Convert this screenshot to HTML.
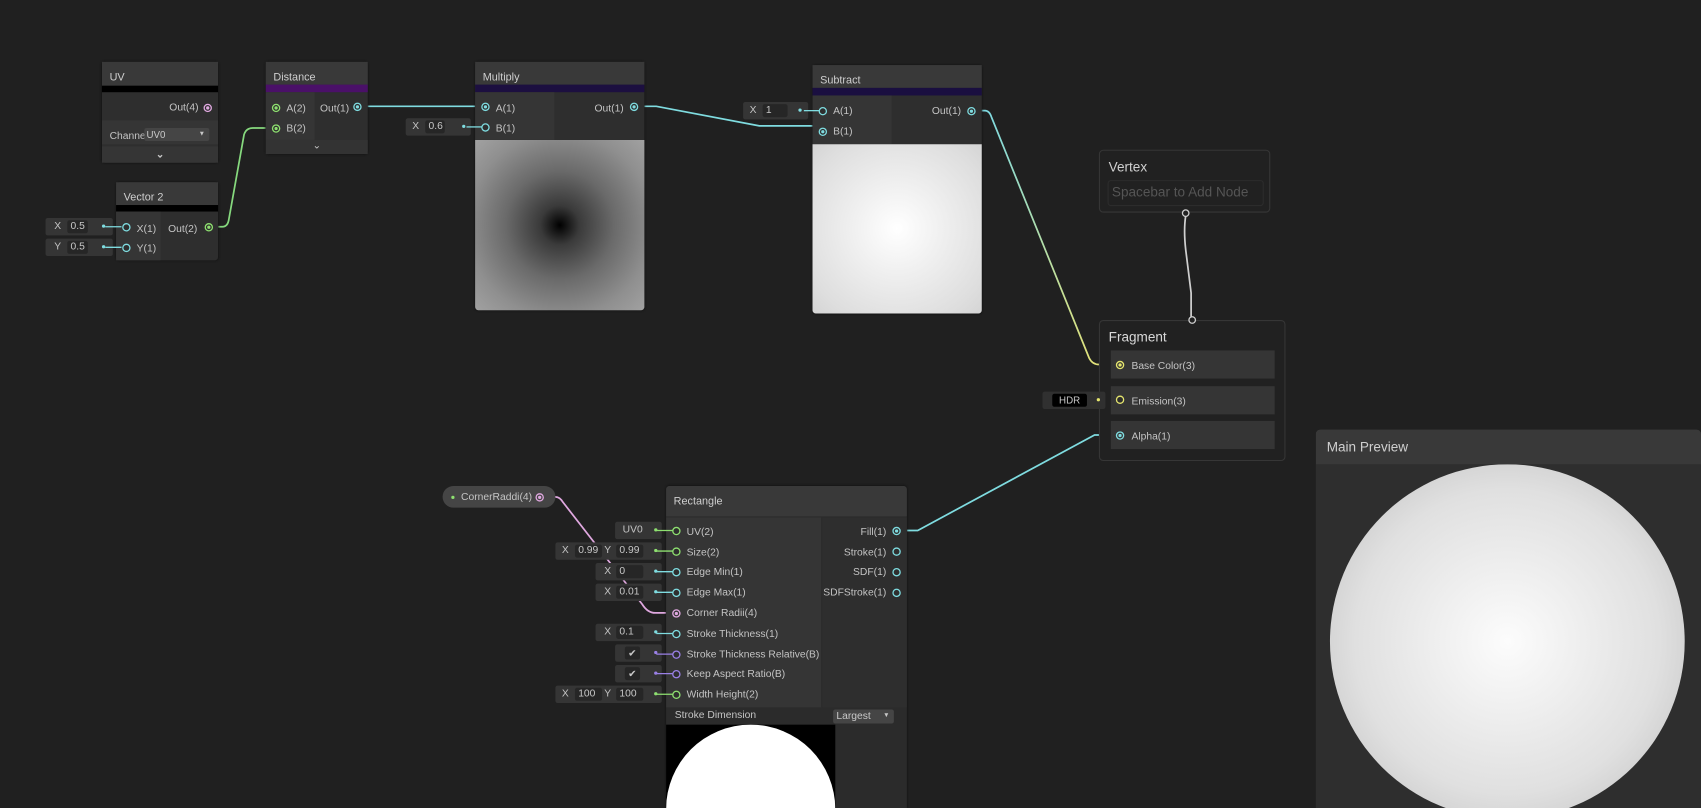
<!DOCTYPE html>
<html><head><meta charset="utf-8">
<style>
*{box-sizing:border-box;margin:0;padding:0}
html,body{width:1701px;height:808px;overflow:hidden;background:#202020}
#s{position:absolute;left:0;top:0;width:1568px;height:745px;overflow:hidden;transform:scale(1.0848);transform-origin:0 0;font-family:"Liberation Sans",sans-serif;color:#c8c8c8;font-size:9.5px}
.a{position:absolute}
.node{position:absolute;background:#2e2e2e;border-radius:3px;box-shadow:0 0 2px #111}
.hd{position:absolute;left:0;right:0;top:0;background:#393939;padding:9px 0 0 7px;font-size:10px;color:#cfcfcf}
.fld{position:absolute;background:#353535;height:16px;border-radius:2px;font-size:9.5px;color:#c8c8c8}
.box{position:absolute;background:#262626;border-radius:2px;top:2px;height:12px;padding-left:3px;line-height:12px}
.lbl{position:absolute;font-size:9.5px;color:#c4c4c4;white-space:nowrap}
.dot{position:absolute;width:3px;height:3px;border-radius:50%}
</style></head><body><div id="s">

<svg class="a" style="left:0;top:0" width="1568" height="745">
<defs>
<linearGradient id="g1" x1="0" x2="1"><stop offset="0" stop-color="#e0b0e0"/><stop offset="1" stop-color="#9be28e"/></linearGradient>
<linearGradient id="g2" x1="0" y1="0" x2="0" y2="1"><stop offset="0" stop-color="#7fd9e0"/><stop offset="1" stop-color="#e2e27a"/></linearGradient>
</defs>
<g fill="none" stroke-width="1.6">
<path d="M196 99 H250" stroke="url(#g1)"/>
<path d="M196 209 H205 Q210 209 211 202 L225 124 Q227 118 233 118 H250" stroke="#86d97e"/>
<path d="M333 98 H443" stroke="#7fdce0"/>
<path d="M588 98 H605 L700 116 H754" stroke="#7fdce0"/>
<path d="M899 102 H908 Q912 102 914 108 L1004 330 Q1007 336 1013 336 H1029" stroke="url(#g2)"/>
<path d="M1093 199 Q1091 212 1093 230 L1098 270 V292" stroke="#cfcfcf"/>
<path d="M831 489 H846 L1009 401 H1029" stroke="#7fdce0"/>
<path d="M501 458 H512 Q516 458 519 463 L592 557 Q597 565 604 565 H619" stroke="#e0a8e0"/>
<path d="M1019 368 H1029" stroke="#e6e66e"/>
</g>
</svg>

<div class="node" style="left:94px;top:57px;width:107px;height:93px">
 <div class="hd" style="height:22px">UV</div>
 <div class="a" style="left:0;right:0;top:22px;height:6px;background:#000"></div>
 <div class="lbl" style="right:18px;top:37px">Out(4)</div>
 <div class="a" style="left:0;right:0;top:54px;height:22px;background:#353535"></div>
 <div class="lbl" style="left:7px;top:63px">Channe</div>
 <div class="a" style="left:39px;top:61px;width:60px;height:12px;background:#454545;border-radius:2px;font-size:9px;padding-left:2px;line-height:12px">UV0<span style="position:absolute;right:4px;font-size:6px">▼</span></div>
 <div class="a" style="left:0;right:0;top:78px;height:15px;background:#353535;text-align:center;font-size:9px;line-height:14px;font-weight:bold">⌄</div>
</div>
<svg class="a" style="left:186px;top:94px" width="11" height="11"><circle cx="5.5" cy="5.5" r="3.3" fill="none" stroke="#e0a8e0" stroke-width="1.2"/><circle cx="5.5" cy="5.5" r="1.5" fill="#e0a8e0"/></svg>

<div class="node" style="left:245px;top:57px;width:94px;height:85px">
 <div class="hd" style="height:21px">Distance</div>
 <div class="a" style="left:0;right:0;top:21px;height:7px;background:#4a1068"></div>
 <div class="a" style="left:0;width:45px;top:28px;height:44px;background:#353535"></div>
 <div class="lbl" style="left:19px;top:38px">A(2)</div>
 <div class="lbl" style="left:19px;top:56px">B(2)</div>
 <div class="lbl" style="left:50px;top:38px">Out(1)</div>
 <div class="a" style="left:0;right:0;top:72px;height:13px;background:#333;text-align:center;font-size:9px;line-height:11px">⌄</div>
</div>

<div class="node" style="left:438px;top:57px;width:156px;height:229px">
 <div class="hd" style="height:21px">Multiply</div>
 <div class="a" style="left:0;right:0;top:21px;height:7px;background:#1c0f40"></div>
 <div class="a" style="left:0;width:73px;top:28px;height:44px;background:#353535"></div>
 <div class="lbl" style="left:19px;top:38px">A(1)</div>
 <div class="lbl" style="left:19px;top:56px">B(1)</div>
 <div class="lbl" style="right:19px;top:38px">Out(1)</div>
 <div class="a" style="left:0;right:0;top:72px;bottom:0;border-radius:0 0 3px 3px;background:radial-gradient(circle at 50% 50%,#000 0,#3a3a3a 18px,#6a6a6a 50px,#8f8f8f 85px,#a8a8a8 120px)"></div>
</div>
<div class="fld" style="left:374px;top:109px;width:60px"><span class="lbl" style="left:6px;top:2px">X</span><div class="box" style="left:18px;width:18px">0.6</div><div class="dot" style="left:52px;top:6px;background:#7fdce0"></div></div>

<div class="node" style="left:107px;top:168px;width:94px;height:72px">
 <div class="hd" style="height:21px">Vector 2</div>
 <div class="a" style="left:0;right:0;top:21px;height:6px;background:#000"></div>
 <div class="a" style="left:0;width:41px;top:27px;height:45px;background:#353535"></div>
 <div class="lbl" style="left:19px;top:38px">X(1)</div>
 <div class="lbl" style="left:19px;top:56px">Y(1)</div>
 <div class="lbl" style="left:48px;top:38px">Out(2)</div>
</div>
<div class="fld" style="left:42px;top:201px;width:62px"><span class="lbl" style="left:8px;top:2px">X</span><div class="box" style="left:20px;width:19px">0.5</div><div class="dot" style="left:52px;top:6px;background:#7fdce0"></div></div>
<div class="fld" style="left:42px;top:220px;width:62px"><span class="lbl" style="left:8px;top:2px">Y</span><div class="box" style="left:20px;width:19px">0.5</div><div class="dot" style="left:52px;top:6px;background:#7fdce0"></div></div>

<div class="node" style="left:749px;top:60px;width:156px;height:229px">
 <div class="hd" style="height:21px">Subtract</div>
 <div class="a" style="left:0;right:0;top:21px;height:7px;background:#1a0f40"></div>
 <div class="a" style="left:0;width:73px;top:28px;height:45px;background:#353535"></div>
 <div class="lbl" style="left:19px;top:37px">A(1)</div>
 <div class="lbl" style="left:19px;top:56px">B(1)</div>
 <div class="lbl" style="right:19px;top:37px">Out(1)</div>
 <div class="a" style="left:0;right:0;top:73px;bottom:0;border-radius:0 0 3px 3px;background:radial-gradient(circle at 50% 50%,#fff 0,#f0f0f0 40px,#dedede 90px,#d0d0d0 120px)"></div>
</div>
<div class="fld" style="left:685px;top:94px;width:60px"><span class="lbl" style="left:6px;top:2px">X</span><div class="box" style="left:18px;width:23px">1</div><div class="dot" style="left:51px;top:6px;background:#7fdce0"></div></div>

<div class="a" style="left:1013px;top:138px;width:158px;height:58px;border:1px solid #363636;border-radius:4px;background:#212121">
 <div class="lbl" style="left:8px;top:8px;font-size:12.5px;color:#d0d0d0">Vertex</div>
 <div class="a" style="left:7px;top:27px;width:144px;height:24px;border:1px solid #2c2c2c;border-radius:3px;font-size:12.5px;color:#555;padding:3px 0 0 3px">Spacebar to Add Node</div>
</div>

<div class="a" style="left:1013px;top:295px;width:172px;height:130px;border:1px solid #363636;border-radius:4px;background:#212121">
 <div class="lbl" style="left:8px;top:8px;font-size:12.5px;color:#d8d8d8">Fragment</div>
 <div class="a" style="left:10px;top:27px;width:151px;height:26px;background:#353535"><span class="lbl" style="left:19px;top:9px">Base Color(3)</span></div>
 <div class="a" style="left:10px;top:60px;width:151px;height:26px;background:#353535"><span class="lbl" style="left:19px;top:9px">Emission(3)</span></div>
 <div class="a" style="left:10px;top:92px;width:151px;height:26px;background:#353535"><span class="lbl" style="left:19px;top:9px">Alpha(1)</span></div>
</div>
<div class="fld" style="left:961px;top:361px;width:58px;background:#303030"><div class="box" style="left:9px;width:32px;background:#000;text-align:center;padding:0;font-size:9px">HDR</div><div class="dot" style="left:50px;top:6px;background:#e6e66e"></div></div>

<div class="a" style="left:1213px;top:396px;width:355px;height:349px;background:#2e2e2e;border-radius:4px 4px 0 0;overflow:hidden">
 <div class="a" style="left:13px;top:32px;width:327px;height:327px;border-radius:50%;background:radial-gradient(circle at 50% 50%,#fcfcfc 0,#eeeeee 70px,#e0e0e0 140px,#d6d6d6 163px)"></div>
 <div class="a" style="left:0;right:0;top:0;height:32px;background:#393939;padding:9px 0 0 10px;font-size:12.5px;color:#cfcfcf">Main Preview</div>
</div>

<div class="a" style="left:408px;top:448px;width:104px;height:20px;border-radius:10px;background:#454545">
 <div class="dot" style="left:8px;top:9px;background:#8ee070"></div>
 <span class="lbl" style="left:17px;top:5px">CornerRaddi(4)</span>
</div>
<svg class="a" style="left:492px;top:453px" width="11" height="11"><circle cx="5.5" cy="5.5" r="3.3" fill="none" stroke="#e0a8e0" stroke-width="1.2"/><circle cx="5.5" cy="5.5" r="1.5" fill="#e0a8e0"/></svg>

<div class="node" style="left:614px;top:448px;width:222px;height:297px;background:#2b2b2b;border-radius:3px 3px 0 0;overflow:hidden">
 <div class="hd" style="height:28px;padding-top:9px">Rectangle</div>
 <div class="a" style="left:0;width:143px;top:29px;height:175px;background:#353535"></div>
 <div class="a" style="left:144px;right:0;top:29px;height:175px;background:#2e2e2e"></div>
 <div class="lbl" style="left:19px;top:37px">UV(2)</div>
 <div class="lbl" style="left:19px;top:56px">Size(2)</div>
 <div class="lbl" style="left:19px;top:74px">Edge Min(1)</div>
 <div class="lbl" style="left:19px;top:93px">Edge Max(1)</div>
 <div class="lbl" style="left:19px;top:112px">Corner Radii(4)</div>
 <div class="lbl" style="left:19px;top:131px">Stroke Thickness(1)</div>
 <div class="lbl" style="left:19px;top:150px">Stroke Thickness Relative(B)</div>
 <div class="lbl" style="left:19px;top:168px">Keep Aspect Ratio(B)</div>
 <div class="lbl" style="left:19px;top:187px">Width Height(2)</div>
 <div class="lbl" style="right:19px;top:37px">Fill(1)</div>
 <div class="lbl" style="right:19px;top:56px">Stroke(1)</div>
 <div class="lbl" style="right:19px;top:74px">SDF(1)</div>
 <div class="lbl" style="right:19px;top:93px">SDFStroke(1)</div>
 <div class="lbl" style="left:8px;top:206px">Stroke Dimension</div>
 <div class="a" style="left:154px;top:206px;width:56px;height:13px;background:#454545;border-radius:2px;font-size:9.5px;padding-left:3px;line-height:13px">Largest<span style="position:absolute;right:4px;font-size:6px">▼</span></div>
 <div class="a" style="left:0;top:220px;width:156px;height:80px;background:#000;overflow:hidden"><div class="a" style="left:0;top:0;width:156px;height:156px;border-radius:50%;background:#fff"></div></div>
</div>
<div class="fld" style="left:567px;top:481px;width:43px"><span class="lbl" style="left:7px;top:2px">UV0</span><div class="dot" style="left:36px;top:6px;background:#8ee070"></div></div>
<div class="fld" style="left:512px;top:500px;width:98px"><span class="lbl" style="left:6px;top:2px">X</span><div class="box" style="left:18px;width:25px">0.99</div><span class="lbl" style="left:45px;top:2px">Y</span><div class="box" style="left:56px;width:25px;overflow:hidden">0.99</div><div class="dot" style="left:91px;top:6px;background:#8ee070"></div></div>
<div class="fld" style="left:549px;top:519px;width:61px"><span class="lbl" style="left:8px;top:2px">X</span><div class="box" style="left:19px;width:25px">0</div><div class="dot" style="left:54px;top:6px;background:#7fdce0"></div></div>
<div class="fld" style="left:549px;top:538px;width:61px"><span class="lbl" style="left:8px;top:2px">X</span><div class="box" style="left:19px;width:25px">0.01</div><div class="dot" style="left:54px;top:6px;background:#7fdce0"></div></div>
<div class="fld" style="left:549px;top:575px;width:61px"><span class="lbl" style="left:8px;top:2px">X</span><div class="box" style="left:19px;width:25px">0.1</div><div class="dot" style="left:54px;top:6px;background:#7fdce0"></div></div>
<div class="fld" style="left:567px;top:594px;width:43px"><div class="box" style="left:9px;width:14px;font-size:9px;padding-left:3px">✔</div><div class="dot" style="left:36px;top:6px;background:#9a80e6"></div></div>
<div class="fld" style="left:567px;top:613px;width:43px"><div class="box" style="left:9px;width:14px;font-size:9px;padding-left:3px">✔</div><div class="dot" style="left:36px;top:6px;background:#9a80e6"></div></div>
<div class="fld" style="left:512px;top:632px;width:98px"><span class="lbl" style="left:6px;top:2px">X</span><div class="box" style="left:18px;width:25px">100</div><span class="lbl" style="left:45px;top:2px">Y</span><div class="box" style="left:56px;width:25px">100</div><div class="dot" style="left:91px;top:6px;background:#8ee070"></div></div>

<svg class="a" style="left:0;top:0" width="1568" height="745">
<g stroke-width="1.2">
<g fill="none">
<path d="M97 209 H112 M97 228 H112" stroke="#7fdce0"/>
<path d="M430 117 H444" stroke="#7fdce0"/>
<path d="M741 102 H755" stroke="#7fdce0"/>
<path d="M605 489 H620 M605 508 H620 M605 640 H620" stroke="#8ee070"/>
<path d="M605 527 H620 M605 546 H620 M605 584 H620" stroke="#7fdce0"/>
<path d="M605 603 H620 M605 621 H620" stroke="#9a80e6"/>
</g>
<g fill="#2e2e2e">
<circle cx="116.5" cy="209.5" r="3.3" stroke="#7fdce0"/>
<circle cx="116.5" cy="228.5" r="3.3" stroke="#7fdce0"/>
<circle cx="447.5" cy="117.5" r="3.3" stroke="#7fdce0"/>
<circle cx="758.5" cy="102.5" r="3.3" stroke="#7fdce0"/>
<circle cx="623.5" cy="489.5" r="3.3" stroke="#8ee070"/>
<circle cx="623.5" cy="508.5" r="3.3" stroke="#8ee070"/>
<circle cx="623.5" cy="527.5" r="3.3" stroke="#7fdce0"/>
<circle cx="623.5" cy="546.5" r="3.3" stroke="#7fdce0"/>
<circle cx="623.5" cy="584.5" r="3.3" stroke="#7fdce0"/>
<circle cx="623.5" cy="603.5" r="3.3" stroke="#9a80e6"/>
<circle cx="623.5" cy="621.5" r="3.3" stroke="#9a80e6"/>
<circle cx="623.5" cy="640.5" r="3.3" stroke="#8ee070"/>
<circle cx="826.5" cy="508.5" r="3.3" stroke="#7fdce0"/>
<circle cx="826.5" cy="527.5" r="3.3" stroke="#7fdce0"/>
<circle cx="826.5" cy="546.5" r="3.3" stroke="#7fdce0"/>
<circle cx="1032.5" cy="368.5" r="3.3" stroke="#e6e66e"/>
<circle cx="1093" cy="196.5" r="3" stroke="#cfcfcf" fill="#212121"/>
<circle cx="1099" cy="295" r="3" stroke="#cfcfcf" fill="#212121"/>
</g>
<g>
<circle cx="254.5" cy="99.5" r="3.3" fill="#2e2e2e" stroke="#8ee070"/><circle cx="254.5" cy="99.5" r="1.5" fill="#8ee070"/>
<circle cx="254.5" cy="118.5" r="3.3" fill="#2e2e2e" stroke="#8ee070"/><circle cx="254.5" cy="118.5" r="1.5" fill="#8ee070"/>
<circle cx="329.5" cy="98.5" r="3.3" fill="#2e2e2e" stroke="#7fdce0"/><circle cx="329.5" cy="98.5" r="1.5" fill="#7fdce0"/>
<circle cx="447.5" cy="98.5" r="3.3" fill="#2e2e2e" stroke="#7fdce0"/><circle cx="447.5" cy="98.5" r="1.5" fill="#7fdce0"/>
<circle cx="584.5" cy="98.5" r="3.3" fill="#2e2e2e" stroke="#7fdce0"/><circle cx="584.5" cy="98.5" r="1.5" fill="#7fdce0"/>
<circle cx="758.5" cy="121.5" r="3.3" fill="#2e2e2e" stroke="#7fdce0"/><circle cx="758.5" cy="121.5" r="1.5" fill="#7fdce0"/>
<circle cx="895.5" cy="102.5" r="3.3" fill="#2e2e2e" stroke="#7fdce0"/><circle cx="895.5" cy="102.5" r="1.5" fill="#7fdce0"/>
<circle cx="192.5" cy="209.5" r="3.3" fill="#2e2e2e" stroke="#8ee070"/><circle cx="192.5" cy="209.5" r="1.5" fill="#8ee070"/>
<circle cx="826.5" cy="489.5" r="3.3" fill="#2e2e2e" stroke="#7fdce0"/><circle cx="826.5" cy="489.5" r="1.5" fill="#7fdce0"/>
<circle cx="623.5" cy="565.5" r="3.3" fill="#353535" stroke="#e0a8e0"/><circle cx="623.5" cy="565.5" r="1.5" fill="#e0a8e0"/>
<circle cx="1032.5" cy="336.5" r="3.3" fill="#353535" stroke="#e6e66e"/><circle cx="1032.5" cy="336.5" r="1.5" fill="#e6e66e"/>
<circle cx="1032.5" cy="401.5" r="3.3" fill="#353535" stroke="#7fdce0"/><circle cx="1032.5" cy="401.5" r="1.5" fill="#7fdce0"/>
</g>
</g>
</svg>
</div></body></html>
